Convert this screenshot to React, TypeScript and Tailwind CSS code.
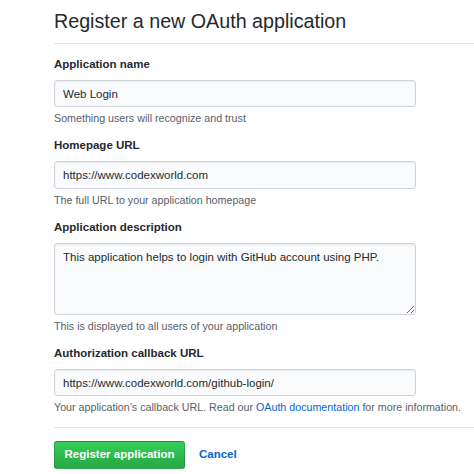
const font = { fontFamily: '"Liberation Sans", Arial, Helvetica, sans-serif' };

const inputClass =
  "block w-[362px] rounded-[3px] border border-[#d1d5da] bg-[#fafbfc] px-[8px] text-[11.5px] text-[#24292e] shadow-[inset_0_1px_2px_rgba(27,31,35,0.075)] outline-none";

function Field({
  label,
  hint,
  children,
}: {
  label: string;
  hint: React.ReactNode;
  children: React.ReactNode;
}) {
  return (
    <div className="mt-[11px] first:mt-0">
      <label className="block text-[11.5px] font-bold leading-[17px] text-[#24292e]">{label}</label>
      <div className="mt-[7px]">{children}</div>
      <p className="mt-[3px] text-[10.7px] leading-[16px] text-[#586069]">{hint}</p>
    </div>
  );
}

export default function App() {
  return (
    <main className="min-h-screen bg-white" style={font}>
      <section className="pl-[54px]">
        <h1 className="mt-[6px] border-b border-[#e1e4e8] pb-[7px] text-[19.7px] font-normal leading-[30px] text-[#24292e]">
          Register a new OAuth application
        </h1>

        <form className="mt-[12px]" onSubmit={(e) => e.preventDefault()}>
          <Field label="Application name" hint="Something users will recognize and trust">
            <input className={`${inputClass} h-[27px]`} defaultValue="Web Login" style={font} />
          </Field>

          <Field label="Homepage URL" hint="The full URL to your application homepage">
            <input className={`${inputClass} h-[28px]`} defaultValue="https://www.codexworld.com" style={font} />
          </Field>

          <Field label="Application description" hint="This is displayed to all users of your application">
            <textarea
              className={`${inputClass} h-[72px] resize-y py-[5px] leading-[17px]`}
              defaultValue="This application helps to login with GitHub account using PHP."
              style={font}
            />
          </Field>

          <Field
            label="Authorization callback URL"
            hint={
              <>
                Your application’s callback URL. Read our{" "}
                <a href="#" className="text-[#0366d6]">
                  OAuth documentation
                </a>{" "}
                for more information.
              </>
            }
          >
            <input
              className={`${inputClass} h-[27px]`}
              defaultValue="https://www.codexworld.com/github-login/"
              style={font}
            />
          </Field>

          <div className="mt-[12px] border-t border-[#e1e4e8] pt-[13px]">
            <div className="flex items-center gap-[14px]">
              <button
                type="submit"
                className="h-[28px] w-[131px] rounded-[3px] border border-[rgba(27,31,35,0.2)] bg-gradient-to-b from-[#34d058] to-[#28a745] text-[11.5px] font-bold text-white"
                style={font}
              >
                Register application
              </button>
              <a href="#" className="text-[11.5px] font-bold text-[#0366d6]">
                Cancel
              </a>
            </div>
          </div>
        </form>
      </section>
    </main>
  );
}
